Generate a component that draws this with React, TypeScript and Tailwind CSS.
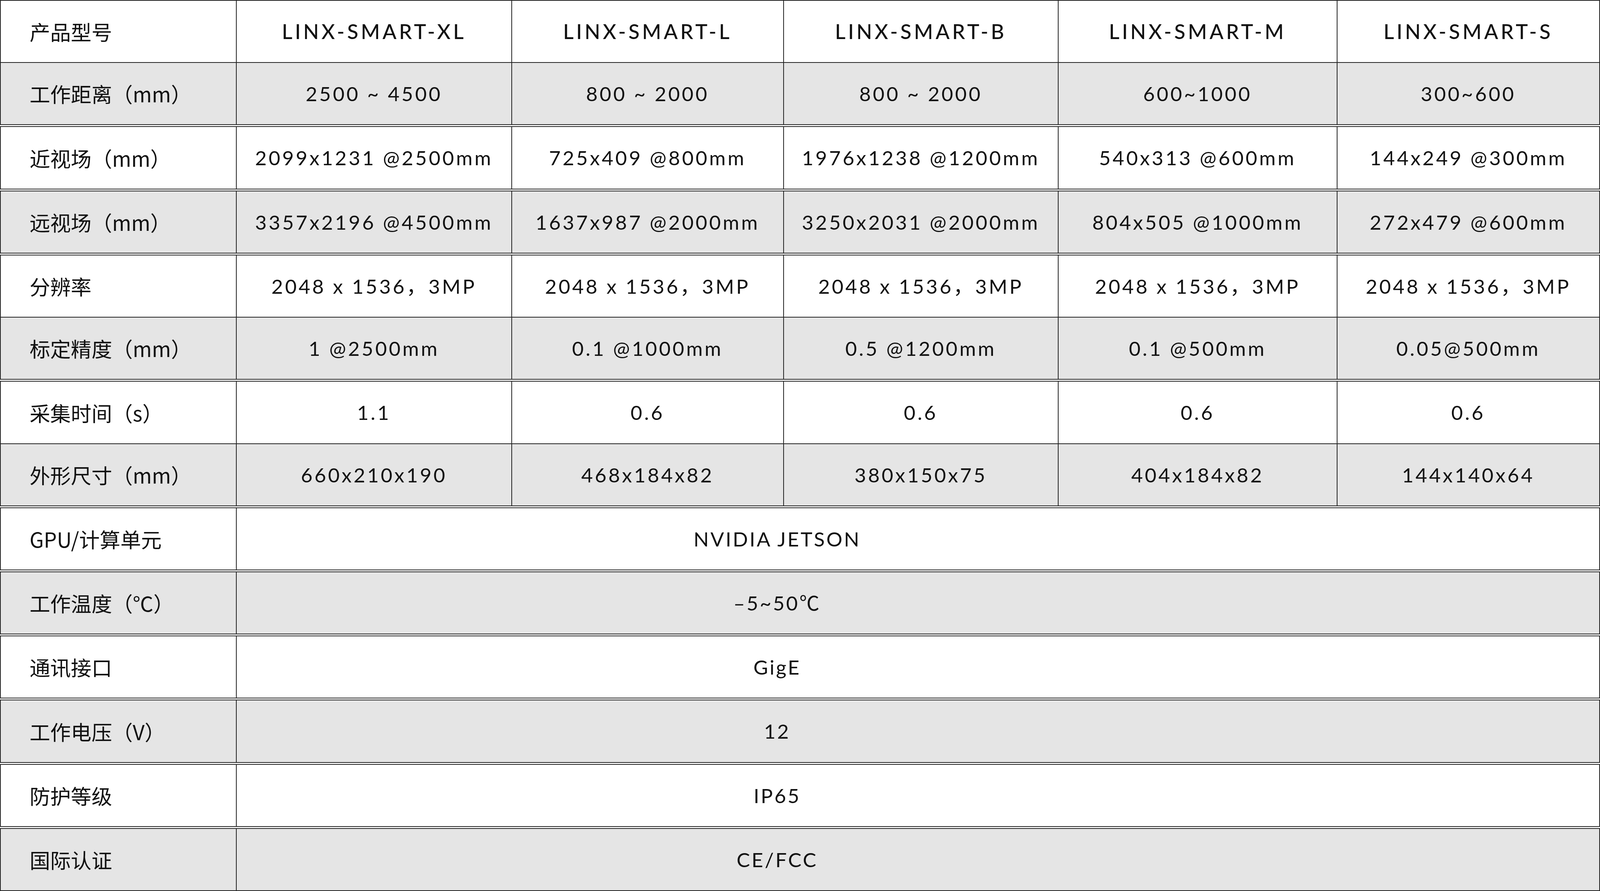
const MODELS = ["LINX-SMART-XL", "LINX-SMART-L", "LINX-SMART-B", "LINX-SMART-M", "LINX-SMART-S"];

// per-model specs, one row each
const SPEC_ROWS = [
  { label: "工作距离（mm）", values: ["2500 ~ 4500", "800 ~ 2000", "800 ~ 2000", "600~1000", "300~600"], split: false },
  { label: "近视场（mm）", values: ["2099x1231 @2500mm", "725x409 @800mm", "1976x1238 @1200mm", "540x313 @600mm", "144x249 @300mm"], split: true },
  { label: "远视场（mm）", values: ["3357x2196 @4500mm", "1637x987 @2000mm", "3250x2031 @2000mm", "804x505 @1000mm", "272x479 @600mm"], split: true },
  { label: "分辨率", values: ["2048 x 1536，3MP", "2048 x 1536，3MP", "2048 x 1536，3MP", "2048 x 1536，3MP", "2048 x 1536，3MP"], split: true },
  { label: "标定精度（mm）", values: ["1 @2500mm", "0.1 @1000mm", "0.5 @1200mm", "0.1 @500mm", "0.05@500mm"], split: false },
  { label: "采集时间（s）", values: ["1.1", "0.6", "0.6", "0.6", "0.6"], split: true },
  { label: "外形尺寸（mm）", values: ["660x210x190", "468x184x82", "380x150x75", "404x184x82", "144x140x64"], split: false },
];

// specs shared by every model
const SHARED_ROWS = [
  { label: "GPU/计算单元", value: "NVIDIA JETSON" },
  { label: "工作温度（℃）", value: "–5~50℃" },
  { label: "通讯接口", value: "GigE" },
  { label: "工作电压（V）", value: "12" },
  { label: "防护等级", value: "IP65" },
  { label: "国际认证", value: "CE/FCC" },
];

const COL_WIDTHS = ["w-[17.22%]", "w-[17.01%]", "w-[17.18%]", "w-[17.45%]", "w-[16.42%]"];

const labelCls =
  "flex w-[14.714%] shrink-0 items-center pl-[1.8vw] text-[1.29vw] font-['Noto_Sans_CJK_SC',sans-serif] text-[#111]";
const valueCls =
  "flex shrink-0 items-center justify-center border-l-2 border-[#222] font-['Lato','Noto_Sans_CJK_SC',sans-serif] text-[#111]";

function Row({
  gray,
  split,
  first,
  children,
}: {
  gray: boolean;
  split: boolean;
  first?: boolean;
  children: React.ReactNode;
}) {
  return (
    <div
      className={`flex flex-1 border-x-2 border-b-2 border-[#222] ${gray ? "bg-[#e5e5e5]" : "bg-white"} ${
        first ? "border-t-2" : split ? "mt-[3px] border-t-2" : ""
      }`}
    >
      {children}
    </div>
  );
}

export default function App() {
  return (
    <div className="flex h-screen w-full flex-col overflow-hidden bg-white leading-none">
      <Row gray={false} split={false} first>
        <div className={labelCls}>产品型号</div>
        {MODELS.map((m, i) => (
          <div key={m} className={`${valueCls} ${COL_WIDTHS[i]} text-[1.28vw] font-medium tracking-[0.125em]`}>
            {m}
          </div>
        ))}
      </Row>

      {SPEC_ROWS.map((row, r) => (
        <Row key={row.label} gray={r % 2 === 0} split={row.split}>
          <div className={labelCls}>{row.label}</div>
          {row.values.map((v, i) => (
            <div key={i} className={`${valueCls} ${COL_WIDTHS[i]} text-[1.25vw] tracking-[0.1em]`}>
              {v}
            </div>
          ))}
        </Row>
      ))}

      {SHARED_ROWS.map((row, r) => (
        <Row key={row.label} gray={r % 2 === 1} split>
          <div className={labelCls}>{row.label}</div>
          <div className={`${valueCls} flex-1 pr-[17.6vw] text-[1.25vw] tracking-[0.08em]`}>{row.value}</div>
        </Row>
      ))}
    </div>
  );
}
